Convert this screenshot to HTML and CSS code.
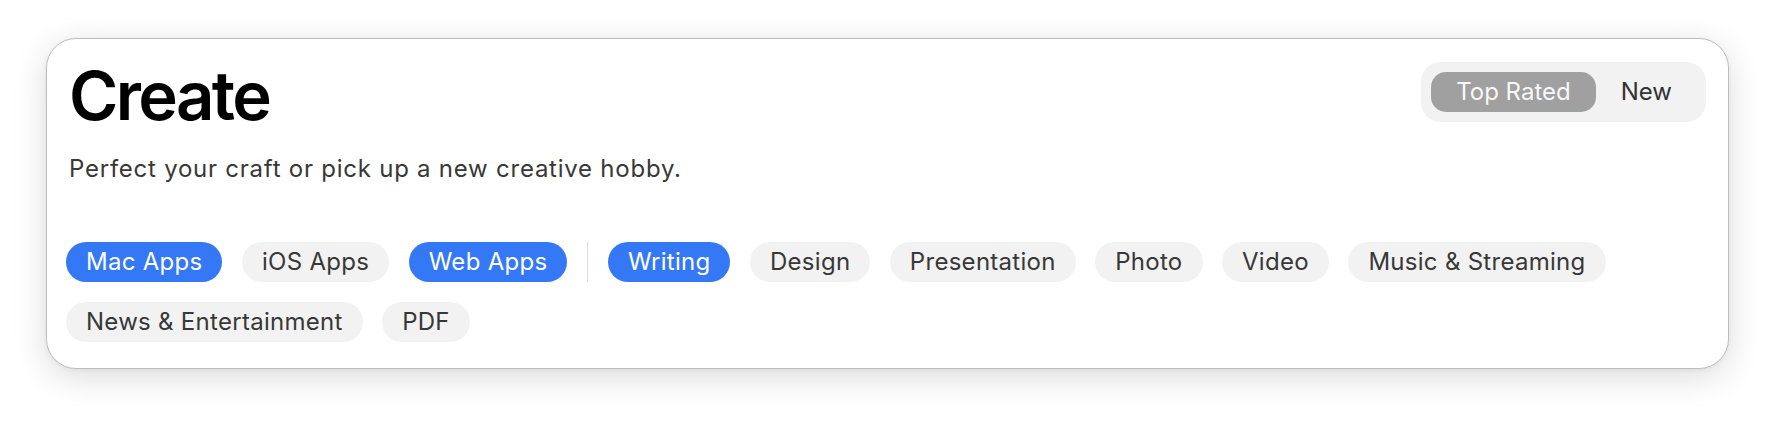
FILE: index.html
```html
<!DOCTYPE html>
<html lang="en">
<head>
<meta charset="utf-8">
<title>Create</title>
<link rel="stylesheet" href="styles.css">
</head>
<body>
<div class="page">
  <section class="card">
    <header class="card-head">
      <div class="intro">
        <h1 class="title">Create</h1>
        <p class="subtitle">Perfect your craft or pick up a new creative hobby.</p>
      </div>
      <div class="toggle">
        <button class="toggle-btn is-active">Top Rated</button>
        <button class="toggle-btn">New</button>
      </div>
    </header>
    <div class="chips">
      <span class="chip is-on">Mac Apps</span>
      <span class="chip">iOS Apps</span>
      <span class="chip is-on">Web Apps</span>
      <span class="divider"></span>
      <span class="chip is-on">Writing</span>
      <span class="chip">Design</span>
      <span class="chip">Presentation</span>
      <span class="chip">Photo</span>
      <span class="chip">Video</span>
      <span class="chip">Music &amp; Streaming</span>
      <span class="chip">News &amp; Entertainment</span>
      <span class="chip">PDF</span>
    </div>
  </section>
</div>
</body>
</html>
```
FILE: styles.css
```css
html, body {
  margin: 0;
  background: #ffffff;
}
body {
  font-family: Inter, "Noto Sans", sans-serif;
  color: #333333;
}
.page {
  padding: 38px 47px 55px 46px;
}
.card {
  background: #ffffff;
  border: 1px solid #bdbdbd;
  border-radius: 30px;
  box-shadow: 0 8px 34px rgba(0, 0, 0, 0.14), 0 1px 4px rgba(0, 0, 0, 0.05);
  padding: 23px 22px 26px 19px;
}
.card-head {
  display: flex;
  justify-content: space-between;
  align-items: flex-start;
}
.intro {
  margin-left: 3px;
}
.title {
  margin: 0;
  font-size: 67px;
  line-height: 67px;
  font-weight: 600;
  letter-spacing: -2.6px;
  color: #000000;
}
.subtitle {
  margin: 28px 0 0;
  font-size: 24px;
  line-height: 24px;
  letter-spacing: 0.76px;
  color: #383838;
}
.toggle {
  display: flex;
  background: #f2f2f2;
  border-radius: 20px;
  padding: 10px;
}
.toggle-btn {
  font-family: inherit;
  font-size: 24px;
  height: 40px;
  line-height: 40px;
  padding: 0 24px 0 25px;
  border: 0;
  border-radius: 15px;
  background: transparent;
  color: #333333;
}
.toggle-btn.is-active {
  background: #a0a0a0;
  color: #f7f7f7;
  padding: 0 25px;
}
.chips {
  display: flex;
  flex-wrap: wrap;
  align-items: center;
  column-gap: 19.5px;
  row-gap: 20px;
  margin-top: 61px;
}
.chip {
  height: 40px;
  line-height: 40px;
  padding: 0 20px;
  border-radius: 20px;
  background: #f2f2f2;
  color: #383838;
  font-size: 24px;
  letter-spacing: 0.28px;
  white-space: nowrap;
}
.chip.is-on {
  background: #3478f6;
  color: #ffffff;
}
.divider {
  width: 1.5px;
  height: 40px;
  background: #dedede;
}
```
